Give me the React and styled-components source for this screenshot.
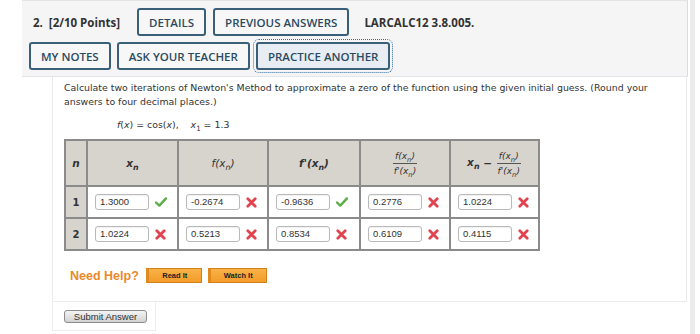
import React from "react";
import styled, { createGlobalStyle } from "styled-components";

const Global = createGlobalStyle`
  html, body { margin: 0; padding: 0; background: #fff; }
  body { font-family: "Open Sans", "Liberation Sans", sans-serif; }
`;

const Page = styled.div`
  display: flex;
  min-height: 334px;
  padding-left: 22px;
  box-sizing: border-box;
`;

const Main = styled.div`
  width: 666px;
  display: flex;
  flex-direction: column;
`;

const Rail = styled.div`
  width: 5px;
  margin-left: 2px;
  background: #ececec;
`;

const Header = styled.div`
  background: #f5f5f5;
  border-top: 1px solid #e4e4e4;
  border-right: 1px solid #dcdcdc;
  border-bottom: 1px solid #e2e6ea;
  padding: 7px 0 6px 7px;
  display: flex;
  flex-direction: column;
  gap: 6px;
`;

const HeaderRow = styled.div`
  display: flex;
  align-items: center;
  gap: ${(p) => p.$gap || 6}px;
`;

const Label = styled.span`
  font-weight: 700;
  font-size: 11.5px;
  color: #333;
  margin: 0 ${(p) => p.$right || 0}px 0 ${(p) => p.$left || 0}px;
  white-space: nowrap;
`;

const NavButton = styled.button`
  height: 28px;
  padding: 0 10px;
  box-sizing: border-box;
  border: 2px solid #3a5f78;
  border-radius: 3px;
  background: ${(p) => (p.$active ? "#e7edf3" : "#f7f7f7")};
  color: #2b4a61;
  font-family: "Open Sans", sans-serif;
  font-weight: 600;
  font-size: 11.5px;
  white-space: nowrap;
  outline: ${(p) => (p.$active ? "1px dotted #2f6fa5" : "none")};
  outline-offset: 2px;
`;

const Content = styled.div`
  margin-left: 30px;
  width: 635px;
  box-sizing: border-box;
  background: #fff;
  border: 1px solid #ebebeb;
  border-top: none;
  padding: 4px 12px 18px 11px;
  font-family: "DejaVu Sans", Verdana, sans-serif;
  font-size: 9.4px;
  color: #333;
`;

const Prompt = styled.p`
  margin: 0;
  line-height: 14px;
  width: 590px;
`;

const Formula = styled.div`
  margin: 9px 0 7px 53px;
  line-height: 14px;
  white-space: pre;
`;

const Sub = styled.sub`
  font-size: 0.75em;
  vertical-align: -3px;
  line-height: 0;
`;

const Table = styled.table`
  border-collapse: collapse;
  border: 2px solid #8b8b8b;
  font-family: "DejaVu Sans", Verdana, sans-serif;
`;

const Th = styled.th`
  background: #d7d4cd;
  border: 2px solid #8b8b8b;
  width: ${(p) => p.$w}px;
  height: 44px;
  padding: 0;
  font-size: 10.5px;
  font-weight: ${(p) => (p.$bold ? 700 : 400)};
  font-style: italic;
  color: #333;
  text-align: center;
  vertical-align: middle;
`;

const NCell = styled.td`
  background: #d7d4cd;
  border: 2px solid #8b8b8b;
  border-top-color: #a3a3a3;
  font-weight: 700;
  font-size: 10px;
  text-align: center;
  height: 30px;
  padding: 0;
`;

const Td = styled.td`
  border: 2px solid #8b8b8b;
  border-top-color: #b3b3b3;
  padding: 0 0 0 7px;
  height: 30px;
`;

const Field = styled.div`
  display: flex;
  align-items: center;
  gap: 6px;
`;

const Input = styled.div`
  width: 54px;
  height: 16px;
  box-sizing: border-box;
  border: 1px solid #b9b9b9;
  border-radius: 3px;
  background: #fff;
  font-family: "Liberation Sans", Arial, sans-serif;
  font-size: 9.5px;
  color: #333;
  padding-left: 4px;
  line-height: 14px;
  box-shadow: inset 0 1px 1px rgba(0,0,0,0.06);
`;

const Frac = styled.span`
  display: inline-flex;
  flex-direction: column;
  align-items: center;
  vertical-align: middle;
  font-size: 9px;
  font-weight: 400;
`;

const Num = styled.span`
  padding: 0 2px 1px;
  border-bottom: 1px solid #555;
  line-height: 12px;
`;

const Den = styled.span`
  padding: 1px 2px 0;
  line-height: 12px;
`;

const Help = styled.div`
  display: flex;
  align-items: center;
  gap: 6px;
  margin: 17px 0 0 6px;
  height: 15px;
`;

const HelpText = styled.span`
  font-family: "Liberation Sans", Arial, sans-serif;
  font-weight: 700;
  font-size: 12.5px;
  color: #e8892c;
  margin-right: 1px;
`;

const HelpButton = styled.button`
  width: ${(p) => p.$w}px;
  height: 15px;
  padding: 0;
  background: linear-gradient(#f9b247, #f39c2a);
  border: 1px solid #d1801c;
  border-left: 3px solid #e08a1d;
  font-family: "Liberation Sans", Arial, sans-serif;
  font-weight: 700;
  font-size: 7.5px;
  color: #222;
`;

const SubmitBox = styled.div`
  margin-left: 30px;
  width: 104px;
  box-sizing: border-box;
  border: 1px solid #ededed;
  border-top: none;
  padding: 8px 0 7px 11px;
  display: flex;
`;

const SubmitButton = styled.button`
  width: 83px;
  height: 13px;
  padding: 0;
  border: 1px solid #8c8c8c;
  border-radius: 3px;
  background: linear-gradient(#f4f4f4, #d2d2d2);
  font-family: "Liberation Sans", Arial, sans-serif;
  font-size: 9.5px;
  line-height: 11px;
  color: #333;
`;

const Check = () => (
  <svg width="12" height="10" viewBox="0 0 12 10">
    <path d="M1 5.5 L4.3 8.6 L11 1.4" fill="none" stroke="#5aae45" strokeWidth="2.4" strokeLinecap="round" strokeLinejoin="round" />
  </svg>
);

const Cross = () => (
  <svg width="11" height="11" viewBox="0 0 11 11">
    <path d="M1.8 1.8 L9.2 9.2 M9.2 1.8 L1.8 9.2" stroke="#e2444f" strokeWidth="2.8" strokeLinecap="round" />
  </svg>
);

const X = ({ n }) => (
  <span>x<Sub>{n}</Sub></span>
);

const rows = [
  { n: 1, vals: [["1.3000", true], ["-0.2674", false], ["-0.9636", true], ["0.2776", false], ["1.0224", false]] },
  { n: 2, vals: [["1.0224", false], ["0.5213", false], ["0.8534", false], ["0.6109", false], ["0.4115", false]] },
];

export default function App() {
  return (
    <>
      <Global />
      <Page>
        <Main>
          <Header>
            <HeaderRow $gap={7}>
              <Label $left={4} $right={10}>2.&nbsp; [2/10 Points]</Label>
              <NavButton>DETAILS</NavButton>
              <NavButton>PREVIOUS ANSWERS</NavButton>
              <Label $left={8}>LARCALC12 3.8.005.</Label>
            </HeaderRow>
            <HeaderRow $gap={6}>
              <NavButton>MY NOTES</NavButton>
              <NavButton>ASK YOUR TEACHER</NavButton>
              <NavButton $active>PRACTICE ANOTHER</NavButton>
            </HeaderRow>
          </Header>
          <Content>
            <Prompt>
              Calculate two iterations of Newton's Method to approximate a zero of the function using the given initial guess. (Round your answers to four decimal places.)
            </Prompt>
            <Formula>
              <i>f</i>(<i>x</i>) = cos(<i>x</i>),{"    "}<i>x</i><Sub>1</Sub> = 1.3
            </Formula>
            <Table>
              <thead>
                <tr>
                  <Th $w={20} $bold>n</Th>
                  <Th $w={89} $bold><X n="n" /></Th>
                  <Th $w={88}>f(<X n="n" />)</Th>
                  <Th $w={90} $bold>f'(<X n="n" />)</Th>
                  <Th $w={88}>
                    <Frac>
                      <Num>f(<X n="n" />)</Num>
                      <Den>f'(<X n="n" />)</Den>
                    </Frac>
                  </Th>
                  <Th $w={87} $bold>
                    <X n="n" /> −{" "}
                    <Frac>
                      <Num>f(<X n="n" />)</Num>
                      <Den>f'(<X n="n" />)</Den>
                    </Frac>
                  </Th>
                </tr>
              </thead>
              <tbody>
                {rows.map((r) => (
                  <tr key={r.n}>
                    <NCell>{r.n}</NCell>
                    {r.vals.map(([v, ok], i) => (
                      <Td key={i}>
                        <Field>
                          <Input>{v}</Input>
                          {ok ? <Check /> : <Cross />}
                        </Field>
                      </Td>
                    ))}
                  </tr>
                ))}
              </tbody>
            </Table>
            <Help>
              <HelpText>Need Help?</HelpText>
              <HelpButton $w={56}>Read It</HelpButton>
              <HelpButton $w={59}>Watch It</HelpButton>
            </Help>
          </Content>
          <SubmitBox>
            <SubmitButton>Submit Answer</SubmitButton>
          </SubmitBox>
        </Main>
        <Rail />
      </Page>
    </>
  );
}
